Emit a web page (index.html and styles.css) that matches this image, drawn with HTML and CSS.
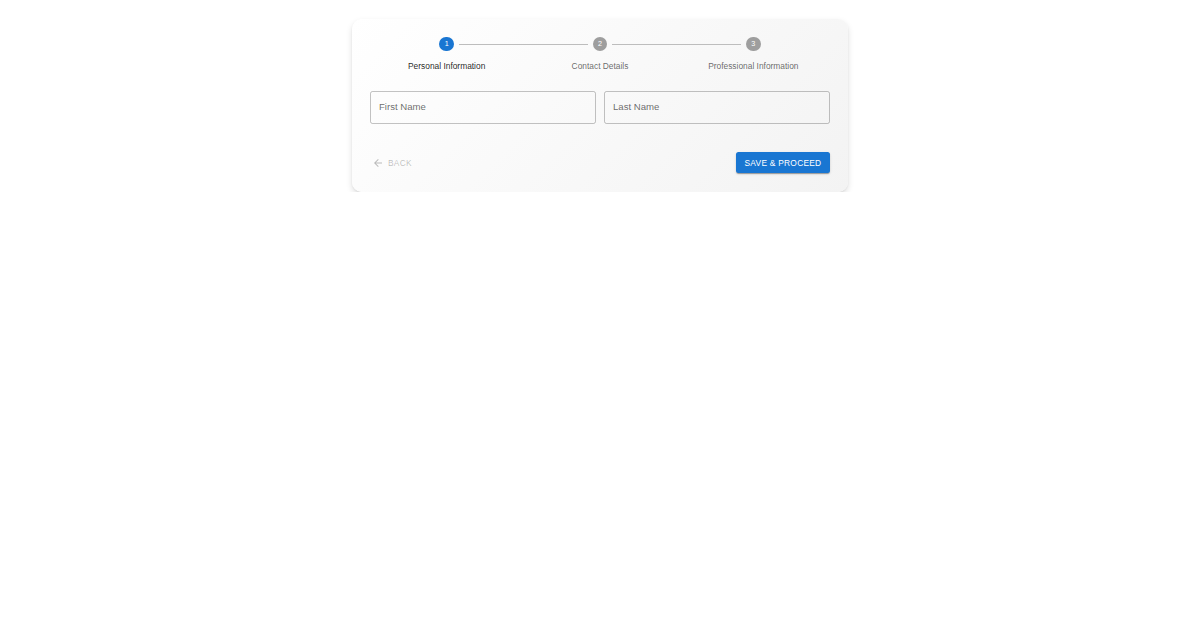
FILE: index.html
```html
<!DOCTYPE html>
<html lang="en">

<head>
    <meta charset="utf-8">
    <meta name="viewport" content="width=device-width, initial-scale=1.0">
    <title>Registration</title>
    <link rel="stylesheet" href="styles.css">
</head>

<body>
    <main class="kort">
        <ol class="trin">
            <li class="skridt aktiv">
                <span class="cirkel">1</span>
                <span class="tekst">Personal Information</span>
            </li>
            <li class="skridt">
                <span class="linje"></span>
                <span class="cirkel">2</span>
                <span class="tekst">Contact Details</span>
            </li>
            <li class="skridt">
                <span class="linje"></span>
                <span class="cirkel">3</span>
                <span class="tekst">Professional Information</span>
            </li>
        </ol>

        <form class="felter">
            <input type="text" placeholder="First Name">
            <input type="text" placeholder="Last Name">
        </form>

        <div class="knapper">
            <button class="tilbage" disabled>
                <svg width="12" height="12" viewBox="0 0 24 24">
                    <path d="M20 11H7.83l5.59-5.59L12 4l-8 8 8 8 1.41-1.41L7.83 13H20v-2z" fill="currentColor"/>
                </svg>
                BACK
            </button>
            <button class="gem">SAVE &amp; PROCEED</button>
        </div>
    </main>
</body>

</html>
```

FILE: styles.css
```css
body {
    margin: 0;
    font-family: "Liberation Sans", Arial, sans-serif;
    background-color: white;
}

.kort {
    width: 460px;
    margin: 19px auto 0;
    padding: 18px 18px 19px;
    border-radius: 10px;
    background: linear-gradient(135deg, #ffffff 0%, #f3f3f3 100%);
    box-shadow: 0 3px 6px rgba(0, 0, 0, 0.13), 0 1px 2px rgba(0, 0, 0, 0.06);
}

.trin {
    display: grid;
    grid-template-columns: 1fr 1fr 1fr;
    list-style: none;
    margin: 0;
    padding: 0;
}

.skridt {
    position: relative;
    display: flex;
    flex-direction: column;
    align-items: center;
}

.cirkel {
    width: 14.4px;
    height: 14.4px;
    border-radius: 50%;
    background-color: #9e9e9e;
    color: white;
    font-size: 7.2px;
    line-height: 14.4px;
    text-align: center;
}

.aktiv .cirkel {
    background-color: #1976d2;
}

.linje {
    position: absolute;
    top: 7px;
    left: calc(-50% + 12px);
    right: calc(50% + 12px);
    border-top: 1px solid #bdbdbd;
}

.tekst {
    margin-top: 10px;
    font-size: 8.4px;
    line-height: 1.4;
    color: rgba(0, 0, 0, 0.6);
}

.aktiv .tekst {
    color: rgba(0, 0, 0, 0.87);
}

.felter {
    display: grid;
    grid-template-columns: 1fr 1fr;
    grid-gap: 8px;
    margin-top: 17.6px;
}

.felter input {
    box-sizing: border-box;
    height: 33px;
    padding: 0 8px 1px;
    border: 1px solid rgba(0, 0, 0, 0.23);
    border-radius: 2.5px;
    background: transparent;
    font-family: inherit;
    font-size: 9.6px;
    outline: none;
}

.felter input::placeholder {
    color: rgba(0, 0, 0, 0.6);
}

.knapper {
    display: flex;
    justify-content: space-between;
    align-items: center;
    margin-top: 28px;
}

button {
    font-family: inherit;
    font-weight: normal;
    font-size: 8.4px;
    letter-spacing: 0.25px;
    border: none;
    border-radius: 2.5px;
    height: 21.6px;
}

.tilbage {
    display: flex;
    align-items: center;
    gap: 4px;
    padding: 0 5px 0 2px;
    background: transparent;
    color: rgba(0, 0, 0, 0.26);
}

.gem {
    padding: 0 8.6px;
    background-color: #1976d2;
    color: white;
    box-shadow: 0 2px 1px -1px rgba(0, 0, 0, 0.2), 0 1px 1px rgba(0, 0, 0, 0.14), 0 1px 3px rgba(0, 0, 0, 0.12);
}
```
